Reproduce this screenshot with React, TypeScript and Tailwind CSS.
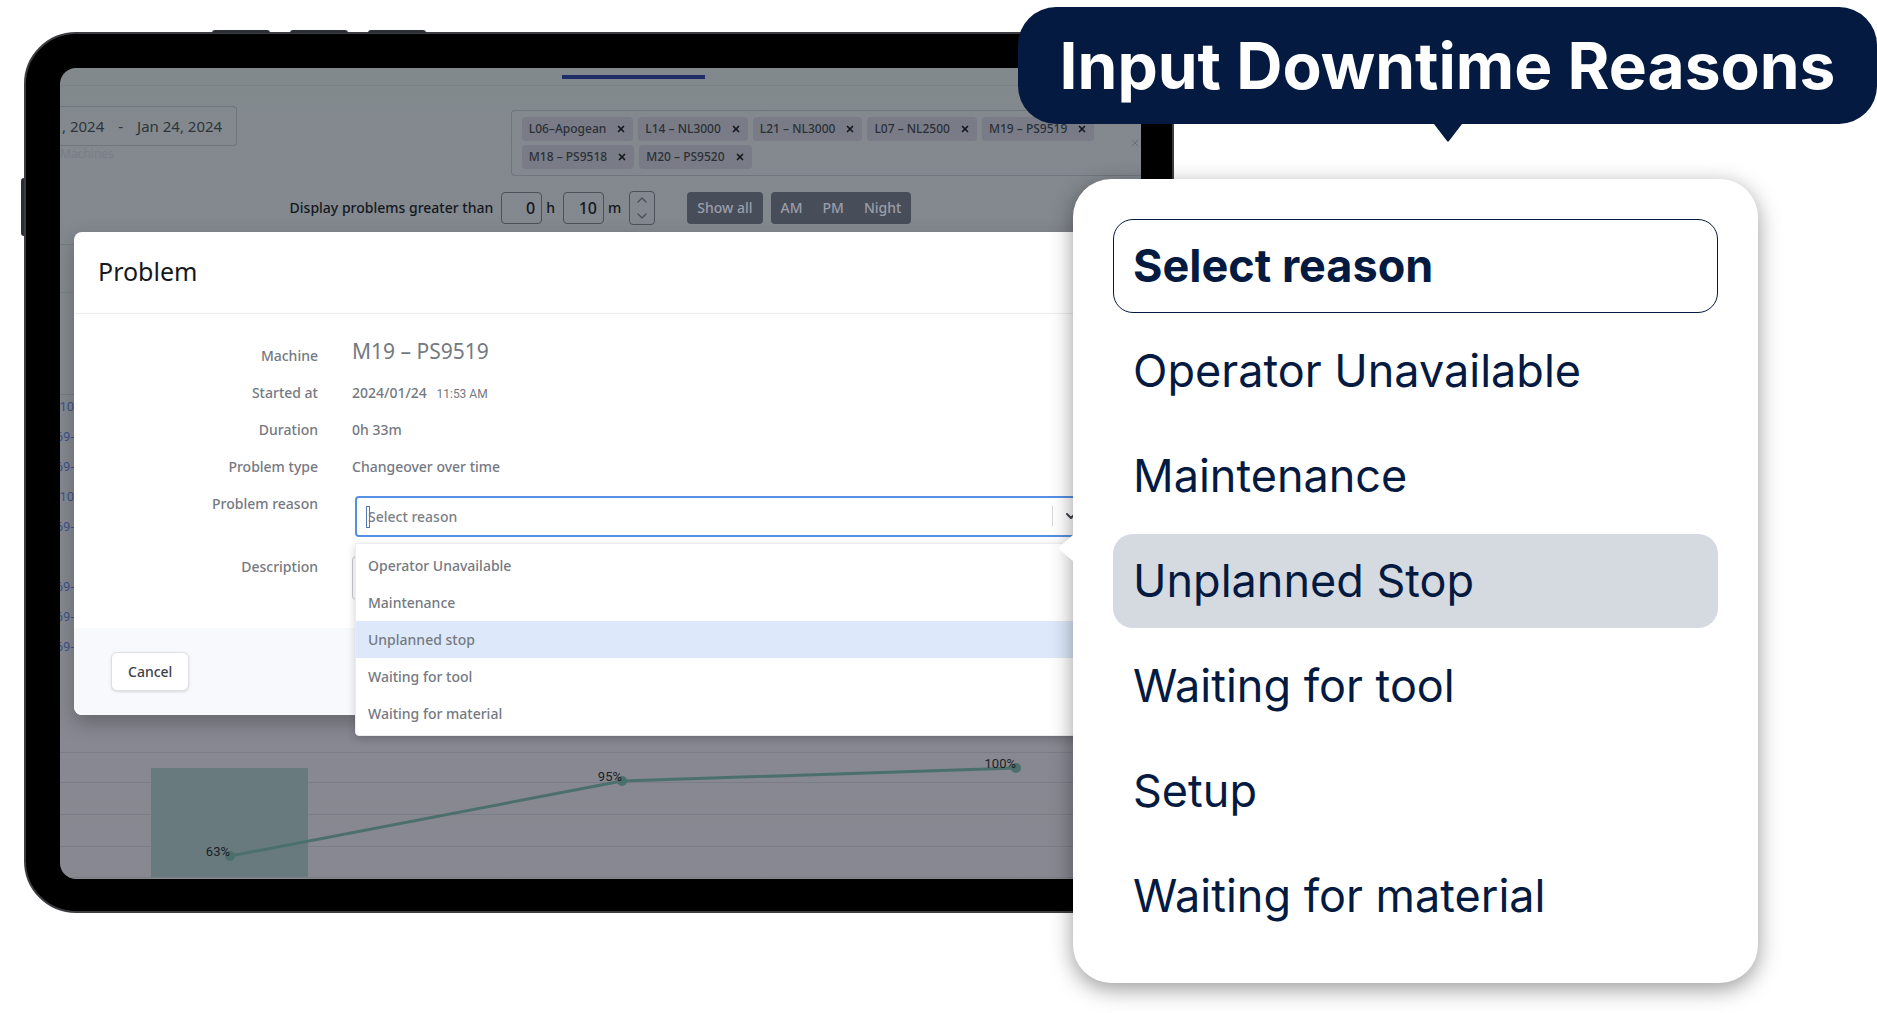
import { useState } from 'react';
import { ChevronDown, ChevronUp, X } from 'lucide-react';

const MACHINES = [
  'L06–Apogean',
  'L14 – NL3000',
  'L21 – NL3000',
  'L07 – NL2500',
  'M19 – PS9519',
  'M18 – PS9518',
  'M20 – PS9520',
];

const TABLE_REFS = ['110', '69-', '69-', '110', '69-', '', '69-', '69-', '69-'];

const MODAL_REASONS = ['Operator Unavailable', 'Maintenance', 'Unplanned stop', 'Waiting for tool', 'Waiting for material'];

const CALLOUT_REASONS = ['Operator Unavailable', 'Maintenance', 'Unplanned Stop', 'Waiting for tool', 'Setup', 'Waiting for material'];

const POINTS = [
  { x: 170, y: 104, label: '63%' },
  { x: 562, y: 29, label: '95%' },
  { x: 956, y: 16, label: '100%' },
];

// ─── Dashboard behind the modal ───────────────────────────────────────────────

function Filters() {
  return (
    <div className="flex items-start justify-between pt-5">
      <div>
        <div className="flex h-10 items-center gap-3.5 rounded-r-sm border border-l-0 border-[#71767c] pl-0.5 pr-3.5 text-[15px] text-[#2f343b]">
          <span>, 2024</span>
          <span>-</span>
          <span>Jan 24, 2024</span>
        </div>
        <div className="text-xs leading-4 text-[#797e87]">Machines</div>
      </div>
      <div className="mt-1 flex w-[58.3%] items-center rounded-l-sm border border-r-0 border-[#71757d] py-1.5 pl-2.5">
        <ul className="flex flex-1 flex-wrap gap-x-[5px] gap-y-1">
          {MACHINES.map(name => (
            <li key={name} className="flex h-6 items-center gap-2.5 rounded-sm bg-[#797c86] px-[7px] text-xs font-medium text-[#2b2f36]">
              {name}
              <button type="button" aria-label={`Remove ${name}`} className="text-[#14171c]">
                <X size={10} strokeWidth={4} />
              </button>
            </li>
          ))}
        </ul>
        <button type="button" aria-label="Clear machines" className="text-[#6a6e76]">
          <X size={12} />
        </button>
      </div>
    </div>
  );
}

function ThresholdRow() {
  const box = 'h-8 w-[41px] rounded border border-[#4c5159] bg-transparent pr-1.5 text-right text-base text-[#14181e]';
  return (
    <div className="mt-[15px] flex items-center justify-center text-sm font-medium text-[#14181e]">
      <label htmlFor="hours" className="mr-2">Display problems greater than</label>
      <input id="hours" className={box} defaultValue="0" />
      <label htmlFor="hours" className="ml-1 mr-2">h</label>
      <input id="minutes" aria-label="Minutes" className={box} defaultValue="10" />
      <label htmlFor="minutes" className="ml-1 mr-2">m</label>
      <div className="flex flex-col rounded border border-[#4c5159] px-0.5 text-[#4c5159]">
        <button type="button" aria-label="Increase"><ChevronUp size={20} height={16} strokeWidth={2} /></button>
        <button type="button" aria-label="Decrease"><ChevronDown size={20} height={16} strokeWidth={2} /></button>
      </div>
      <button type="button" className="ml-8 h-8 rounded bg-[#484d5a] px-2.5 text-[#9a9ea9]">Show all</button>
      <div className="ml-2 flex h-8 gap-5 rounded bg-[#484d5a] px-2.5 text-[#9a9ea9]">
        <button type="button">AM</button>
        <button type="button">PM</button>
        <button type="button">Night</button>
      </div>
    </div>
  );
}

function TableStrip() {
  return (
    <div className="mt-[19px]">
      <div className="h-12 border-t border-[#777a82]" />
      <div className="h-[102px] border-t border-[#7e8088]" />
      <ul className="border-t border-[#777a82]">
        {TABLE_REFS.map((ref, i) => (
          <li key={i} className="mb-1.5 flex h-6 w-3.5 items-center justify-end font-[Roboto] text-[13px] text-[#3b5488]">
            {ref}
          </li>
        ))}
      </ul>
    </div>
  );
}

function ParetoChart() {
  return (
    <svg viewBox="0 0 1081 127" className="mt-[93px] block w-full" role="img" aria-label="Cumulative downtime">
      {[0, 30, 62, 94, 125].map(y => (
        <line key={y} x1="0" x2="1081" y1={y + 0.5} y2={y + 0.5} stroke="#7b7c85" />
      ))}
      <rect x="91" y="16" width="157" height="109" fill="#687a7e" />
      <polyline points={POINTS.map(p => `${p.x},${p.y}`).join(' ')} fill="none" stroke="#4b706c" strokeWidth="3" />
      {POINTS.map(p => (
        <g key={p.label}>
          <circle cx={p.x} cy={p.y} r="5" fill="#4b706c" />
          <text x={p.x} y={p.y} textAnchor="end" fontFamily="Roboto, sans-serif" fontSize="13" fill="#1d2026">{p.label}</text>
        </g>
      ))}
    </svg>
  );
}

// ─── Problem modal ────────────────────────────────────────────────────────────

function ProblemModal() {
  const [active, setActive] = useState('Unplanned stop');

  return (
    <section
      role="dialog"
      aria-labelledby="problem-title"
      className="absolute inset-x-3.5 top-[164px] rounded-lg bg-white text-sm font-medium text-[#757982] shadow-[0_8px_20px_rgba(0,0,0,0.25)]"
    >
      <h2 id="problem-title" className="border-b border-[#ebecef] px-6 pt-[23px] pb-[25px] text-[25px] leading-[33px] font-normal text-[#15181d]">Problem</h2>

      <div className="grid grid-cols-[244px_1fr] gap-x-[34px] pb-7 pr-8 pt-[19px] leading-[37px]">
        <div className="pt-1 text-right">Machine</div>
        <div className="text-[21px] leading-[37px] font-normal">M19 – PS9519</div>
        <div className="text-right">Started at</div>
        <div>2024/01/24 <span className="ml-1.5 font-[Roboto] text-xs font-normal">11:53 AM</span></div>
        <div className="text-right">Duration</div>
        <div>0h 33m</div>
        <div className="text-right">Problem type</div>
        <div>Changeover over time</div>
        <label htmlFor="reason" className="h-[63px] text-right">Problem reason</label>
        <div className="relative ml-[3px] mt-[11px] h-[41px]">
          <select
            id="reason"
            className="h-full w-full appearance-none rounded border-2 border-[#5590e2] bg-white pl-[11px] text-[#7b7f88] outline-none"
          >
            <option>Select reason</option>
          </select>
          <span className="absolute left-[11px] top-2.5 h-[22px] w-1 border border-[#5577b8]" />
          <span className="absolute right-[42px] top-2.5 h-5 border-l border-[#d6d8dc]" />
          <ChevronDown size={16} strokeWidth={3} className="absolute right-4 top-3 text-[#3f444d]" />

          <ul className="absolute inset-x-0 top-[47px] z-10 rounded-b border border-[#ececef] bg-white py-[3px] shadow-[0_3px_8px_rgba(0,0,0,0.18)]">
            {MODAL_REASONS.map(reason => (
              <li key={reason}>
                <button
                  type="button"
                  onClick={() => setActive(reason)}
                  className={`block w-full px-3 text-left ${reason === active ? 'bg-[#dde9fb]' : ''}`}
                >
                  {reason}
                </button>
              </li>
            ))}
          </ul>
        </div>
        <label htmlFor="description" className="text-right">Description</label>
        <textarea id="description" className="mt-2 h-11 rounded border border-[#c3c6cc]" />
      </div>

      <footer className="rounded-b-lg bg-[#f8f9fc] px-[37px] py-6">
        <button type="button" className="h-[39px] rounded-md border border-[#dfe0e4] bg-white px-4 text-[#3e424a] shadow-sm">
          Cancel
        </button>
      </footer>
    </section>
  );
}

function Tablet() {
  return (
    <div className="relative ml-6 mt-8 min-w-0 flex-1 rounded-[52px] border-2 border-[#3b3d41] bg-black p-[34px] pr-[31px] pb-8">
      <span className="absolute -left-[5px] top-36 h-[58px] w-[3px] rounded-l bg-[#2b2e33]" />
      <div className="absolute -top-1 left-[186px] flex gap-5">
        <span className="h-[3px] w-[58px] rounded-t bg-[#2b2e33]" />
        <span className="h-[3px] w-[58px] rounded-t bg-[#2b2e33]" />
        <span className="h-[3px] w-[58px] rounded-t bg-[#2b2e33]" />
      </div>
      <div className="relative overflow-hidden rounded-2xl bg-linear-to-b from-[#82898d] via-[#84888f] via-30% to-[#888891]">
        <nav className="flex h-[18px] justify-center border-b border-[#7c8188] pt-[7px]">
          <a href="#problems" aria-label="Problems" className="ml-[66px] h-1 w-[143px] bg-[#1c2d68]" />
        </nav>
        <Filters />
        <ThresholdRow />
        <TableStrip />
        <ParetoChart />
        <ProblemModal />
      </div>
    </div>
  );
}

// ─── Callout ──────────────────────────────────────────────────────────────────

function Callout() {
  const [active, setActive] = useState('Unplanned Stop');

  return (
    <aside className="relative z-10 -ml-[156px] w-[859px] shrink-0 pt-[7px] font-[Inter] text-[#051a40]">
      <h1 className="flex h-[117px] items-center justify-center whitespace-nowrap rounded-[38px] bg-[#051a40] text-[64px] font-bold text-white">
        Input Downtime Reasons
      </h1>
      <svg viewBox="0 0 28 18" className="mx-auto h-[18px] w-7" aria-hidden="true">
        <path d="M0 0H28L15 17Q14 18 13 17Z" fill="#051a40" />
      </svg>

      <div className="relative mb-7 ml-[55px] mr-[119px] mt-[37px] flex flex-col gap-[11px] rounded-[38px] bg-white p-10 text-[45px] shadow-[0_6px_22px_rgba(0,0,0,0.4)]">
        <svg viewBox="0 0 16 28" className="absolute -left-[15px] top-[355px] h-7 w-4" aria-hidden="true">
          <path d="M16 0L1 13Q0 14 1 15L16 28Z" fill="#fff" />
        </svg>
        <select
          aria-label="Select reason"
          className="h-[94px] appearance-none rounded-[20px] border border-[#051a40] bg-white px-[19px] font-bold outline-none"
        >
          <option>Select reason</option>
        </select>
        {CALLOUT_REASONS.map(reason => (
          <button
            key={reason}
            type="button"
            onClick={() => setActive(reason)}
            className={`h-[94px] rounded-[20px] px-5 text-left ${reason === active ? 'bg-[#d5d9e0]' : ''}`}
          >
            {reason}
          </button>
        ))}
      </div>
    </aside>
  );
}

export default function App() {
  return (
    <main className="flex min-h-screen items-start overflow-hidden bg-white font-['Noto_Sans',sans-serif]">
      <Tablet />
      <Callout />
    </main>
  );
}
